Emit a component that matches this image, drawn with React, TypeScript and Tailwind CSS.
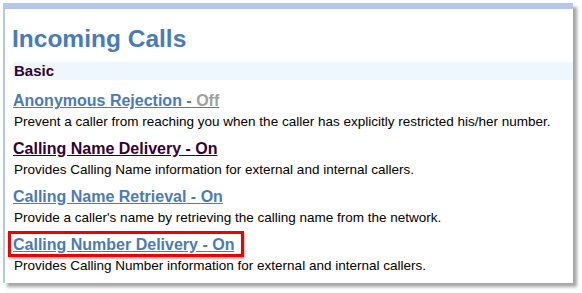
import React from 'react';

const features = [
  {
    name: 'Anonymous Rejection',
    state: 'Off',
    desc: 'Prevent a caller from reaching you when the caller has explicitly restricted his/her number.',
    visited: false,
  },
  {
    name: 'Calling Name Delivery',
    state: 'On',
    desc: 'Provides Calling Name information for external and internal callers.',
    visited: true,
  },
  {
    name: 'Calling Name Retrieval',
    state: 'On',
    desc: "Provide a caller's name by retrieving the calling name from the network.",
    visited: false,
  },
  {
    name: 'Calling Number Delivery',
    state: 'On',
    desc: 'Provides Calling Number information for external and internal callers.',
    visited: false,
    highlight: true,
  },
];

export default function App() {
  return (
    <div className="w-[582px] h-[293px] bg-white pt-[3px] pl-[3px] font-['Liberation_Sans',Arial,sans-serif]">
      <div className="w-[570px] h-[280px] bg-white border-t-[6px] border-l-2 border-[#b4c7e8] shadow-[4px_4px_3px_rgba(0,0,0,0.35)] pl-[8px]">
        <h1 className="text-[24.5px] font-bold text-[#4a7bb3] leading-[28px] mt-[16px] ml-[-1px]">
          Incoming Calls
        </h1>
        <div className="bg-[#eef6fe] h-[18px] mt-[9px] text-[15px] font-bold text-[#330033] leading-[18px] pl-[1px]">
          Basic
        </div>
        <div className="mt-[9px]">
          {features.map((f) => (
            <div key={f.name} className="h-[48px]">
              <div className="relative inline-block">
                {f.highlight && (
                  <div className="absolute left-[-5px] top-[-2px] w-[236px] h-[26px] border-[3px] border-[#ee0000] shadow-[1px_2px_2px_rgba(0,0,0,0.3)]" />
                )}
                <a
                  href="#"
                  className={`relative text-[16px] font-bold underline leading-[20px] ${
                    f.visited ? 'text-[#330033]' : 'text-[#4a7bb3]'
                  }`}
                >
                  {f.name} -{' '}
                  <span className={f.state === 'Off' ? 'text-[#a0a0a0]' : ''}>{f.state}</span>
                </a>
              </div>
              <p className="text-[13.5px] text-black leading-[16px] mt-[1px] ml-[1px]">{f.desc}</p>
            </div>
          ))}
        </div>
      </div>
    </div>
  );
}
